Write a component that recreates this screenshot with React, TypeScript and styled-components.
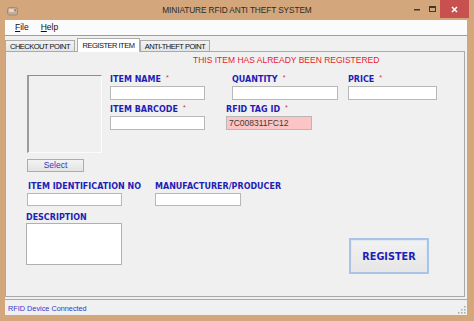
import React from "react";
import styled, { createGlobalStyle } from "styled-components";

const Global = createGlobalStyle`
  html, body { margin: 0; padding: 0; width: 474px; height: 321px; overflow: hidden; background: #d4a67b; }
  #root { width: 474px; height: 321px; }
  * { box-sizing: border-box; }
`;

const UI = `"Liberation Sans", Arial, sans-serif`;
const LABEL = `"DejaVu Sans", Verdana, sans-serif`;

const Window = styled.div`
  width: 474px;
  height: 321px;
  background: #d4a67b;
  display: flex;
  flex-direction: column;
  font-family: ${UI};
`;

const TitleBar = styled.div`
  height: 20px;
  flex: none;
  display: grid;
  grid-template-columns: 1fr auto 1fr;
  align-items: center;
`;

const AppIcon = styled.svg`
  justify-self: start;
  margin-left: 7px;
  margin-top: 1px;
`;

const Title = styled.div`
  font-size: 8.3px;
  letter-spacing: -0.1px;
  line-height: 20px;
  color: #2a2a2a;
  white-space: nowrap;
`;

const Captions = styled.div`
  justify-self: end;
  align-self: start;
  display: flex;
  margin-right: 5px;
  height: 18px;
`;

const CaptionButton = styled.div<{ $w: number; $close?: boolean }>`
  width: ${(p) => p.$w}px;
  height: 18px;
  display: flex;
  align-items: center;
  justify-content: center;
  background: ${(p) => (p.$close ? "#c85150" : "transparent")};
`;

const Client = styled.div`
  flex: 1;
  margin: 0 7px 6px 5px;
  background: #f0f0f0;
  display: flex;
  flex-direction: column;
`;

const MenuBar = styled.div`
  height: 16px;
  flex: none;
  background: #fbfbfb;
  border-bottom: 1px solid #9d9d9d;
  display: flex;
  align-items: center;
  gap: 12px;
  padding-left: 10px;
  font-size: 8.5px;
  color: #111;
`;

const MenuItem = styled.span`
  line-height: 15px;
  & u { text-decoration: underline; text-underline-offset: 1px; }
`;

const TabControl = styled.div`
  flex: 1;
  display: flex;
  flex-direction: column;
  margin-right: 2px;
`;

const TabStrip = styled.div`
  height: 15px;
  flex: none;
  display: flex;
  align-items: flex-end;
`;

const Tab = styled.div<{ $w: number; $active?: boolean }>`
  width: ${(p) => p.$w}px;
  height: ${(p) => (p.$active ? 14 : 11)}px;
  margin-left: ${(p) => (p.$active ? 2 : 0)}px;
  margin-bottom: ${(p) => (p.$active ? -1 : 0)}px;
  position: relative;
  z-index: ${(p) => (p.$active ? 2 : 1)};
  border: 1px solid #acacac;
  border-bottom: none;
  background: ${(p) => (p.$active ? "#ffffff" : "linear-gradient(#f3f3f3, #e4e4e4)")};
  font-size: 7.5px;
  letter-spacing: -0.5px;
  color: #111;
  display: flex;
  align-items: center;
  justify-content: center;
  white-space: nowrap;
  padding-top: ${(p) => (p.$active ? 0 : 1)}px;
`;

const Page = styled.div`
  flex: 1;
  border: 1px solid #a9a9a9;
  background: #f0f0f0;
  display: flex;
  flex-direction: column;
`;

const Message = styled.div`
  margin-top: 3px;
  padding-left: 187px;
  font-size: 8.5px;
  line-height: 10px;
  color: #e3242c;
  white-space: nowrap;
`;

const Upper = styled.div`
  margin-top: 10px;
  padding-left: 21px;
  display: flex;
`;

const ImageCol = styled.div`
  width: 75px;
  display: flex;
  flex-direction: column;
`;

const ImageBox = styled.div`
  height: 78px;
  border-top: 1px solid #8e8e8e;
  border-left: 2px solid #9c9c9c;
  border-right: 1px solid #fbfbfb;
  border-bottom: 1px solid #fbfbfb;
  background: #f0f0f0;
`;

const SelectButton = styled.button`
  width: 57px;
  height: 13px;
  margin-top: 6px;
  padding: 0;
  border: 1px solid #acacac;
  background: linear-gradient(#f3f3f3, #e3e3e3);
  font-family: ${UI};
  font-size: 8.5px;
  line-height: 11px;
  color: #3535c6;
`;

const Fields = styled.div`
  margin-left: 8px;
  display: flex;
  flex-direction: column;
  gap: 5px;
`;

const Row = styled.div<{ $pad?: number }>`
  display: flex;
  padding-left: ${(p) => p.$pad ?? 0}px;
`;

const Field = styled.div<{ $w: number; $gap?: number }>`
  width: ${(p) => p.$w}px;
  margin-left: ${(p) => p.$gap ?? 0}px;
  display: flex;
  flex-direction: column;
`;

const Label = styled.div<{ $indent?: number }>`
  height: 10px;
  line-height: 10px;
  padding-left: ${(p) => p.$indent ?? 0}px;
  font-family: ${LABEL};
  font-weight: bold;
  font-size: 8px;
  color: #1e1eb6;
  white-space: nowrap;
`;

const Star = styled.span`
  display: inline-block;
  margin-left: 5px;
  font-family: ${UI};
  font-weight: normal;
  font-size: 7px;
  color: #c8334a;
  transform: translateY(-2px);
`;

const TextBox = styled.input<{ $h?: number; $tint?: boolean }>`
  display: block;
  width: 100%;
  height: ${(p) => p.$h ?? 14}px;
  margin: 1px 0 0;
  padding: 0 2px;
  border: 1px solid #b8b8b8;
  background: ${(p) => (p.$tint ? "#fbc5c5" : "#ffffff")};
  font-family: ${UI};
  font-size: 8.5px;
  color: #3a3a3a;
  outline: none;
`;

const TextArea = styled.textarea`
  display: block;
  width: 100%;
  height: 42px;
  margin: 0;
  padding: 2px;
  border: 1px solid #b0b0b0;
  background: #ffffff;
  resize: none;
  outline: none;
`;

const Middle = styled(Row)`
  margin-top: 10px;
`;

const Bottom = styled(Row)`
  margin-top: 7px;
  align-items: flex-start;
`;

const RegisterButton = styled.button`
  width: 80px;
  height: 36px;
  margin-left: 227px;
  margin-top: 25px;
  padding: 0;
  border: 2px solid #a8c4e6;
  box-shadow: inset 0 0 0 1px #dfe8f3;
  background: linear-gradient(#f2f2f2, #e6e6e6);
  font-family: ${LABEL};
  font-weight: bold;
  font-size: 9.7px;
  color: #1e1eb8;
`;

const StatusBar = styled.div`
  height: 16px;
  flex: none;
  margin-top: 2px;
  border-top: 1px solid #a9a9a9;
  display: flex;
  align-items: center;
  justify-content: space-between;
  padding: 0 1px 0 3px;
`;

const StatusText = styled.span`
  font-size: 7.3px;
  color: #3535cf;
  padding-top: 1px;
`;

const Grip = styled.svg`
  align-self: flex-end;
  margin-bottom: 1px;
`;

export default function App() {
  return (
    <>
      <Global />
      <Window>
        <TitleBar>
          <AppIcon width="11" height="10" viewBox="0 0 11 10">
            <rect x="0.5" y="1.5" width="10" height="7.5" rx="2" fill="#c6ae96" stroke="#a08a74" />
            <rect x="2" y="3" width="5" height="3" rx="0.8" fill="#e6d6c6" />
            <rect x="7.5" y="3.2" width="1.6" height="1.6" fill="#8f7a66" />
          </AppIcon>
          <Title>MINIATURE RFID ANTI THEFT SYSTEM</Title>
          <Captions>
            <CaptionButton $w={14}>
              <svg width="6" height="4" viewBox="0 0 6 4">
                <rect x="0" y="2" width="6" height="1.5" fill="#3a3a3a" />
              </svg>
            </CaptionButton>
            <CaptionButton $w={16}>
              <svg width="7" height="6" viewBox="0 0 7 6">
                <rect x="0.5" y="0.5" width="6" height="5" fill="none" stroke="#3a3a3a" />
                <rect x="0.5" y="0.5" width="6" height="1.5" fill="#3a3a3a" />
              </svg>
            </CaptionButton>
            <CaptionButton $w={29} $close>
              <svg width="7" height="7" viewBox="0 0 7 7">
                <path d="M1 1 L6 6 M6 1 L1 6" stroke="#ffffff" strokeWidth="1.5" />
              </svg>
            </CaptionButton>
          </Captions>
        </TitleBar>
        <Client>
          <MenuBar>
            <MenuItem>
              <u>F</u>ile
            </MenuItem>
            <MenuItem>
              <u>H</u>elp
            </MenuItem>
          </MenuBar>
          <TabControl>
            <TabStrip>
              <Tab $w={70}>CHECKOUT POINT</Tab>
              <Tab $w={63} $active>
                REGISTER ITEM
              </Tab>
              <Tab $w={70}>ANTI-THEFT POINT</Tab>
            </TabStrip>
            <Page>
              <Message>THIS ITEM HAS ALREADY BEEN REGISTERED</Message>
              <Upper>
                <ImageCol>
                  <ImageBox />
                  <SelectButton>Select</SelectButton>
                </ImageCol>
                <Fields>
                  <Row>
                    <Field $w={95}>
                      <Label>
                        ITEM NAME<Star>*</Star>
                      </Label>
                      <TextBox readOnly />
                    </Field>
                    <Field $w={106} $gap={27}>
                      <Label>
                        QUANTITY<Star>*</Star>
                      </Label>
                      <TextBox readOnly />
                    </Field>
                    <Field $w={89} $gap={10}>
                      <Label>
                        PRICE<Star>*</Star>
                      </Label>
                      <TextBox readOnly />
                    </Field>
                  </Row>
                  <Row>
                    <Field $w={95}>
                      <Label>
                        ITEM BARCODE<Star>*</Star>
                      </Label>
                      <TextBox readOnly />
                    </Field>
                    <Field $w={86} $gap={21}>
                      <Label>
                        RFID TAG ID<Star>*</Star>
                      </Label>
                      <TextBox readOnly $tint value="7C008311FC12" />
                    </Field>
                  </Row>
                </Fields>
              </Upper>
              <Middle $pad={21}>
                <Field $w={95}>
                  <Label $indent={1}>ITEM IDENTIFICATION NO</Label>
                  <TextBox readOnly $h={13} />
                </Field>
                <Field $w={86} $gap={33}>
                  <Label>MANUFACTURER/PRODUCER</Label>
                  <TextBox readOnly $h={13} />
                </Field>
              </Middle>
              <Bottom $pad={20}>
                <Field $w={96}>
                  <Label>DESCRIPTION</Label>
                  <TextArea readOnly />
                </Field>
                <RegisterButton>REGISTER</RegisterButton>
              </Bottom>
            </Page>
          </TabControl>
          <StatusBar>
            <StatusText>RFID Device Connected</StatusText>
            <Grip width="8" height="8" viewBox="0 0 8 8">
              {[
                [6, 0],
                [6, 3],
                [3, 3],
                [6, 6],
                [3, 6],
                [0, 6],
              ].map(([x, y], i) => (
                <rect key={i} x={x} y={y} width="1.5" height="1.5" fill="#a8a8a8" />
              ))}
            </Grip>
          </StatusBar>
        </Client>
      </Window>
    </>
  );
}
